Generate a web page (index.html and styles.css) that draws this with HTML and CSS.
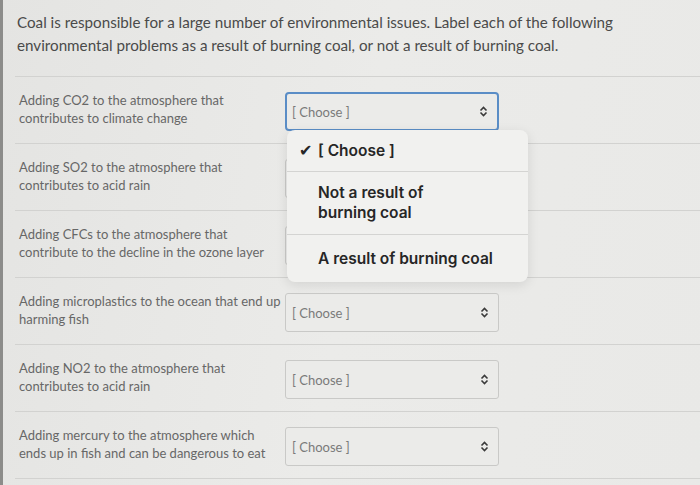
FILE: index.html
```html
<!DOCTYPE html>
<html lang="en">

<head>
  <meta charset="UTF-8" />
  <meta name="viewport" content="width=device-width, initial-scale=1.0" />
  <title>Matching question</title>
  <link rel="stylesheet" href="styles.css">
</head>

<body>
  <div class="quiz">
    <p class="prompt">Coal is responsible for a large number of environmental issues. Label each of the following environmental problems as a result of burning coal, or not a result of burning coal.</p>

    <div class="rows">
      <!-- row 1: select is open, the option list is shown under it -->
      <div class="row">
        <div class="label">Adding CO2 to the atmosphere that contributes to climate change</div>
        <div class="select-wrap">
          <div class="select focus">
            <span>[ Choose ]</span>
            <svg class="arrows" width="9" height="11" viewBox="0 0 9 11"><path d="M1.5 4.5 L4.5 1.5 L7.5 4.5 M1.5 6.5 L4.5 9.5 L7.5 6.5" /></svg>
          </div>
          <ul class="options">
            <li class="selected"><span class="check">&#10004;</span>[ Choose ]</li>
            <li>Not a result of<br>burning coal</li>
            <li>A result of burning coal</li>
          </ul>
        </div>
      </div>

      <div class="row">
        <div class="label">Adding SO2 to the atmosphere that contributes to acid rain</div>
        <div class="select-wrap">
          <div class="select">
            <span class="under">[ Choose ]</span>
            <svg class="arrows" width="9" height="11" viewBox="0 0 9 11"><path d="M1.5 4.5 L4.5 1.5 L7.5 4.5 M1.5 6.5 L4.5 9.5 L7.5 6.5" /></svg>
          </div>
        </div>
      </div>

      <div class="row">
        <div class="label">Adding CFCs to the atmosphere that contribute to the decline in the ozone layer</div>
        <div class="select-wrap">
          <div class="select">
            <span class="under">[ Choose ]</span>
            <svg class="arrows" width="9" height="11" viewBox="0 0 9 11"><path d="M1.5 4.5 L4.5 1.5 L7.5 4.5 M1.5 6.5 L4.5 9.5 L7.5 6.5" /></svg>
          </div>
        </div>
      </div>

      <div class="row">
        <div class="label">Adding microplastics to the ocean that end up harming fish</div>
        <div class="select-wrap">
          <div class="select">
            <span>[ Choose ]</span>
            <svg class="arrows" width="9" height="11" viewBox="0 0 9 11"><path d="M1.5 4.5 L4.5 1.5 L7.5 4.5 M1.5 6.5 L4.5 9.5 L7.5 6.5" /></svg>
          </div>
        </div>
      </div>

      <div class="row">
        <div class="label">Adding NO2 to the atmosphere that contributes to acid rain</div>
        <div class="select-wrap">
          <div class="select">
            <span>[ Choose ]</span>
            <svg class="arrows" width="9" height="11" viewBox="0 0 9 11"><path d="M1.5 4.5 L4.5 1.5 L7.5 4.5 M1.5 6.5 L4.5 9.5 L7.5 6.5" /></svg>
          </div>
        </div>
      </div>

      <div class="row">
        <div class="label">Adding mercury to the atmosphere which ends up in fish and can be dangerous to eat</div>
        <div class="select-wrap">
          <div class="select">
            <span>[ Choose ]</span>
            <svg class="arrows" width="9" height="11" viewBox="0 0 9 11"><path d="M1.5 4.5 L4.5 1.5 L7.5 4.5 M1.5 6.5 L4.5 9.5 L7.5 6.5" /></svg>
          </div>
        </div>
      </div>
    </div>
  </div>
</body>

</html>
```

FILE: styles.css
```css
* {
  margin: 0;
  padding: 0;
  box-sizing: border-box;
}

body {
  height: 485px;
  overflow: hidden;
  background: linear-gradient(100deg, #e4e4e2 0%, #ebebe9 50%, #e9e9e7 100%);
  border-left: 3px solid #8c8c8a;
  font-family: Lato, "Liberation Sans", sans-serif;
  color: #555;
}

.quiz {
  padding: 11px 0 0 12px;
}

.prompt {
  padding-left: 2px;
  width: 640px;
  font-size: 15.2px;
  line-height: 23px;
  color: #4a4a4a;
}

.rows {
  margin-top: 19px;
  border-top: 1px solid #d2d2d0;
}

.row {
  height: 67px;
  display: flex;
  align-items: flex-start;
  padding-top: 15px;
  border-bottom: 1px solid #d2d2d0;
}

.label {
  width: 270px;
  padding-left: 4px;
  padding-right: 1px;
  font-size: 13px;
  line-height: 17.5px;
  color: #676767;
}

.select-wrap {
  position: relative;
}

.select {
  width: 214px;
  height: 39px;
  display: flex;
  align-items: center;
  justify-content: space-between;
  padding: 0 9px 0 6px;
  border: 1px solid #c9c9c7;
  border-radius: 3px;
  background: #ebebe9;
  font-size: 13px;
  color: #7a7a7a;
}

.select.focus {
  border: 2px solid #5a8dc6;
  border-radius: 4px;
  padding-left: 5px;
}

/* hidden behind the open option list */
.select .under {
  visibility: hidden;
}

.arrows path {
  fill: none;
  stroke: #3a3a3a;
  stroke-width: 1.6;
}

/* option list of the open select */
.options {
  position: absolute;
  left: 2px;
  top: 38px;
  width: 241px;
  list-style: none;
  background: #f1f1ef;
  border-radius: 8px;
  box-shadow: 0 3px 12px rgba(0, 0, 0, 0.1);
  font-family: Inter, Roboto, "Noto Sans", sans-serif;
  font-weight: 600;
  font-size: 15.5px;
  line-height: 20px;
  color: #262626;
  z-index: 2;
}

.options li {
  display: flex;
  align-items: center;
  padding-left: 31px;
  border-bottom: 1px solid #d4d4d2;
  height: 63px;
}

.options li:first-child {
  height: 42px;
}

.options li:last-child {
  height: 47px;
  border-bottom: none;
}

.options .selected {
  padding-left: 12px;
}

.check {
  width: 19px;
  font-family: "DejaVu Sans", sans-serif;
  font-size: 16px;
}
```
